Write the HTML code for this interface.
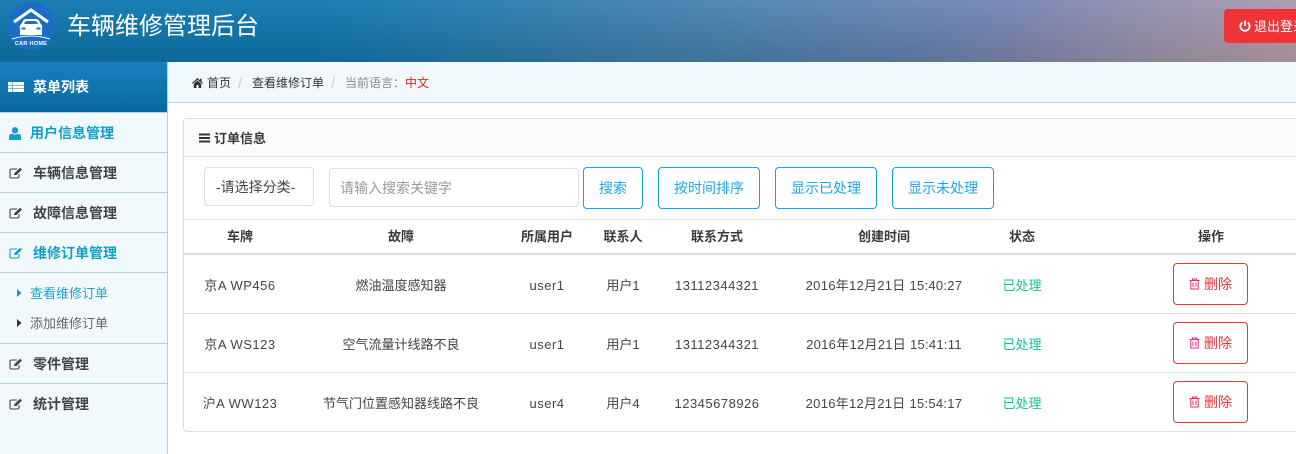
<!DOCTYPE html>
<html lang="zh-CN"><head><meta charset="utf-8"><title>车辆维修管理后台</title>
<style>
*{box-sizing:border-box}
html,body{margin:0;padding:0;width:1296px;height:454px;overflow:hidden;background:#fff;font-family:"Liberation Sans","Noto Sans CJK SC",sans-serif;font-size:13px;color:#333}
.a{position:absolute;white-space:nowrap}
.c{position:absolute;white-space:nowrap;text-align:center;transform:translateX(-50%)}
.hdr{left:0;top:0;width:1296px;height:62px;background:radial-gradient(380px 80px at 100% 100%,rgba(195,155,140,.35),rgba(195,155,140,0)),linear-gradient(180deg,rgba(255,255,255,.05),rgba(0,0,0,.13)),linear-gradient(90deg,#0f78b0 0%,#0f78b0 24%,#4a84b0 56%,#7585b3 78%,#a89ab2 100%)}
.side{left:0;top:62px;width:168px;height:392px;background:#f1f9fc;border-right:1px solid #b8d0da}
.mh{left:0;top:62px;width:167px;height:50px;background:linear-gradient(#1a80bd,#07699f)}
.ln{left:0;width:167px;height:1px;background:#b8d0da}
.m{left:33px;font-size:14px;font-weight:bold;color:#444;line-height:18px}
.btn{position:absolute;top:167px;height:42px;border:1px solid #0ea5e9;border-radius:4px;color:#1aa7ec;background:#fff;text-align:center;line-height:41px;font-size:14px}
.hl{position:absolute;left:184px;width:1112px;background:#ddd;height:1px}
.th{font-weight:bold;top:228px;line-height:18px;color:#3a3a3a;font-size:13px}
.td{line-height:18px;font-size:13px;color:#444}
.n{letter-spacing:.5px}
.d{letter-spacing:.28px}
.ok{color:#13c38b}
.del{position:absolute;left:1173px;width:75px;height:42px;border:1px solid #ee3338;border-radius:4px;color:#ee3338;font-size:14px;line-height:40px;background:#fff;text-align:left;padding-left:15px}
.del svg{vertical-align:-1px;margin-right:4px}
</style></head><body>
<div class="a hdr"></div>
<svg class="a" style="left:7px;top:2px" width="48" height="48" viewBox="0 0 48 48">
<circle cx="24" cy="24" r="24" fill="#1a6fc4"/>
<path d="M7 20 L24 8 L41 20" fill="none" stroke="#fff" stroke-width="3"/>
<path d="M15 21 Q16 17 19 17 H29 Q32 17 33 21 Q36 23 35 28 V33 H13 V28 Q12 23 15 21Z" fill="#fff"/>
<path d="M17 22 Q18 19 20 19 H28 Q30 19 31 22Z" fill="#1a6fc4"/>
<rect x="14.500" y="25.500" width="4" height="2" fill="#1a6fc4"/><rect x="29.500" y="25.500" width="4" height="2" fill="#1a6fc4"/>
<path d="M5 37 Q24 31 43 37" fill="none" stroke="#fff" stroke-width="1"/>
<text x="24" y="43" font-size="5.500" font-weight="bold" fill="#fff" text-anchor="middle" letter-spacing=".3" font-family="Liberation Sans">CAR HOME</text>
</svg>
<div class="a" style="left:67px;top:11px;font-size:24px;line-height:32px;color:#fff">车辆维修管理后台</div>
<div class="a" style="left:1224px;top:9px;width:90px;height:34px;background:#ef3338;border-radius:4px;color:#fff;line-height:35px;padding-left:15px;font-size:13px"><svg width="12" height="12" viewBox="0 0 12 12" style="vertical-align:-1px;margin-right:3px"><path d="M3.300 2.500A4.600 4.600 0 1 0 8.700 2.500" fill="none" stroke="#fff" stroke-width="1.800"/><path d="M6 .5V6" stroke="#fff" stroke-width="1.800"/></svg>退出登录</div>

<div class="a side"></div>
<div class="a mh"></div>
<svg class="a" style="left:8px;top:81px" width="16" height="12" viewBox="0 0 16 12"><path d="M0 1h4v3H0zM4.500 1H16v3H4.500zM0 4.500h4v3H0zM4.500 4.500H16v3H4.500zM0 8h4v3H0zM4.500 8H16v3H4.500z" fill="#fff"/></svg>
<div class="a m" style="top:78px;color:#fff">菜单列表</div>

<div class="a ln" style="top:112px"></div>
<div class="a ln" style="top:152px"></div>
<div class="a ln" style="top:192px"></div>
<div class="a ln" style="top:232px"></div>
<div class="a ln" style="top:272px"></div>
<div class="a ln" style="top:343px"></div>
<div class="a ln" style="top:383px"></div>

<svg class="a" style="left:9px;top:127px" width="12" height="13" viewBox="0 0 12 13"><circle cx="6" cy="3.300" r="3.200" fill="#0e9fca"/><path d="M0 13V10Q0 7 3 6.800Q6 8.500 9 6.800Q12 7 12 10V13Z" fill="#0e9fca"/></svg>
<div class="a m" style="left:30px;top:124px;color:#0e9fca">用户信息管理</div>

<svg class="a" style="left:9px;top:167px" width="14" height="12" viewBox="0 0 14 12"><path d="M8 2H2.500Q1 2 1 3.500V9.500Q1 11 2.500 11H8.500Q10 11 10 9.500V7" fill="none" stroke="#444" stroke-width="1.100"/><path d="M5 8L5.500 6L11 .8L13 2.500L7.500 8Z" fill="#444"/></svg>
<div class="a m" style="top:164px">车辆信息管理</div>
<svg class="a" style="left:9px;top:207px" width="14" height="12" viewBox="0 0 14 12"><path d="M8 2H2.500Q1 2 1 3.500V9.500Q1 11 2.500 11H8.500Q10 11 10 9.500V7" fill="none" stroke="#444" stroke-width="1.100"/><path d="M5 8L5.500 6L11 .8L13 2.500L7.500 8Z" fill="#444"/></svg>
<div class="a m" style="top:204px">故障信息管理</div>
<svg class="a" style="left:9px;top:247px" width="14" height="12" viewBox="0 0 14 12"><path d="M8 2H2.500Q1 2 1 3.500V9.500Q1 11 2.500 11H8.500Q10 11 10 9.500V7" fill="none" stroke="#0e9fca" stroke-width="1.100"/><path d="M5 8L5.500 6L11 .8L13 2.500L7.500 8Z" fill="#0e9fca"/></svg>
<div class="a m" style="top:244px;color:#0e9fca">维修订单管理</div>

<svg class="a" style="left:17px;top:289px" width="5" height="8" viewBox="0 0 5 8"><path d="M0 0L4.500 4L0 8Z" fill="#0e9fca"/></svg>
<div class="a" style="left:30px;top:285px;line-height:18px;color:#1aa3cf">查看维修订单</div>
<svg class="a" style="left:17px;top:319px" width="5" height="8" viewBox="0 0 5 8"><path d="M0 0L4.500 4L0 8Z" fill="#333"/></svg>
<div class="a" style="left:30px;top:315px;line-height:18px;color:#666">添加维修订单</div>

<svg class="a" style="left:9px;top:358px" width="14" height="12" viewBox="0 0 14 12"><path d="M8 2H2.500Q1 2 1 3.500V9.500Q1 11 2.500 11H8.500Q10 11 10 9.500V7" fill="none" stroke="#444" stroke-width="1.100"/><path d="M5 8L5.500 6L11 .8L13 2.500L7.500 8Z" fill="#444"/></svg>
<div class="a m" style="top:355px">零件管理</div>
<svg class="a" style="left:9px;top:398px" width="14" height="12" viewBox="0 0 14 12"><path d="M8 2H2.500Q1 2 1 3.500V9.500Q1 11 2.500 11H8.500Q10 11 10 9.500V7" fill="none" stroke="#444" stroke-width="1.100"/><path d="M5 8L5.500 6L11 .8L13 2.500L7.500 8Z" fill="#444"/></svg>
<div class="a m" style="top:395px">统计管理</div>

<!-- breadcrumb -->
<div class="a" style="left:168px;top:62px;width:1128px;height:41px;background:#f2f9fc;border-bottom:1px solid #b8d0da"></div>
<svg class="a" style="left:192px;top:78px" width="11" height="10" viewBox="0 0 11 10"><path d="M5.500 0L0 5L.8 5.800L5.500 1.700L10.200 5.800L11 5L9.500 3.600V.8H8V2.300Z" fill="#333"/><path d="M1.800 5.800L5.500 2.600L9.200 5.800V10H6.500V7H4.500V10H1.800Z" fill="#333"/></svg>
<div class="a" style="left:207px;top:74px;line-height:18px;font-size:12px">首页</div>
<div class="a" style="left:238px;top:75px;line-height:18px;font-size:15px;color:#ccc">/</div>
<div class="a" style="left:252px;top:74px;line-height:18px;font-size:12px">查看维修订单</div>
<div class="a" style="left:331px;top:75px;line-height:18px;font-size:15px;color:#ccc">/</div>
<div class="a" style="left:345px;top:74px;line-height:18px;font-size:12px;color:#888">当前语言：<span style="color:#d9291c">中文</span></div>

<!-- panel -->
<div class="a" style="left:183px;top:118px;width:1130px;height:314px;border:1px solid #ddd;border-radius:4px;background:#fff"></div>
<div class="a" style="left:184px;top:119px;width:1112px;height:38px;background:#fbfbfb;border-bottom:1px solid #ddd"></div>
<svg class="a" style="left:199px;top:133px" width="11" height="10" viewBox="0 0 11 10"><path d="M0 .5h11v2H0zM0 4h11v2H0zM0 7.500h11v2H0z" fill="#333"/></svg>
<div class="a" style="left:214px;top:130px;line-height:18px;font-weight:bold;color:#3a3a3a">订单信息</div>

<div class="a" style="left:204px;top:167px;width:110px;height:39px;border:1px solid #ddd;border-radius:4px;padding-left:11px;line-height:38px;color:#444;font-size:14px">-请选择分类-</div>
<div class="a" style="left:329px;top:168px;width:250px;height:39px;border:1px solid #ddd;border-radius:4px;padding-left:10px;line-height:38px;color:#999;font-size:14px">请输入搜索关键字</div>
<div class="btn" style="left:583px;width:60px">搜索</div>
<div class="btn" style="left:658px;width:102px">按时间排序</div>
<div class="btn" style="left:775px;width:102px">显示已处理</div>
<div class="btn" style="left:892px;width:102px">显示未处理</div>

<div class="hl" style="top:219px"></div>
<div class="hl" style="top:253px;height:2px"></div>
<div class="hl" style="top:313px"></div>
<div class="hl" style="top:372px"></div>

<div class="c th" style="left:240px">车牌</div>
<div class="c th" style="left:401px">故障</div>
<div class="c th" style="left:547px">所属用户</div>
<div class="c th" style="left:623px">联系人</div>
<div class="c th" style="left:717px">联系方式</div>
<div class="c th" style="left:884px">创建时间</div>
<div class="c th" style="left:1022px">状态</div>
<div class="c th" style="left:1211px">操作</div>

<div class="c td n" style="left:240px;top:277px">京A WP456</div>
<div class="c td" style="left:401px;top:277px">燃油温度感知器</div>
<div class="c td n" style="left:547px;top:277px">user1</div>
<div class="c td" style="left:623px;top:277px">用户1</div>
<div class="c td n" style="left:717px;top:277px">13112344321</div>
<div class="c td d" style="left:884px;top:277px">2016年12月21日 15:40:27</div>
<div class="c td ok" style="left:1022px;top:277px">已处理</div>
<div class="del" style="top:263px"><svg width="11" height="12" viewBox="0 0 11 12"><path d="M.5 2.500h10M3.500 2.500V1h4v1.500M1.800 2.500V11h7.400V2.500M4 4.500V9M7 4.500V9" fill="none" stroke="#ee2a6a" stroke-width="1"/></svg>删除</div>

<div class="c td n" style="left:240px;top:336px">京A WS123</div>
<div class="c td" style="left:401px;top:336px">空气流量计线路不良</div>
<div class="c td n" style="left:547px;top:336px">user1</div>
<div class="c td" style="left:623px;top:336px">用户1</div>
<div class="c td n" style="left:717px;top:336px">13112344321</div>
<div class="c td d" style="left:884px;top:336px">2016年12月21日 15:41:11</div>
<div class="c td ok" style="left:1022px;top:336px">已处理</div>
<div class="del" style="top:322px"><svg width="11" height="12" viewBox="0 0 11 12"><path d="M.5 2.500h10M3.500 2.500V1h4v1.500M1.800 2.500V11h7.400V2.500M4 4.500V9M7 4.500V9" fill="none" stroke="#ee2a6a" stroke-width="1"/></svg>删除</div>

<div class="c td n" style="left:240px;top:395px">沪A WW123</div>
<div class="c td" style="left:401px;top:395px">节气门位置感知器线路不良</div>
<div class="c td n" style="left:547px;top:395px">user4</div>
<div class="c td" style="left:623px;top:395px">用户4</div>
<div class="c td n" style="left:717px;top:395px">12345678926</div>
<div class="c td d" style="left:884px;top:395px">2016年12月21日 15:54:17</div>
<div class="c td ok" style="left:1022px;top:395px">已处理</div>
<div class="del" style="top:381px"><svg width="11" height="12" viewBox="0 0 11 12"><path d="M.5 2.500h10M3.500 2.500V1h4v1.500M1.800 2.500V11h7.400V2.500M4 4.500V9M7 4.500V9" fill="none" stroke="#ee2a6a" stroke-width="1"/></svg>删除</div>
</body></html>
